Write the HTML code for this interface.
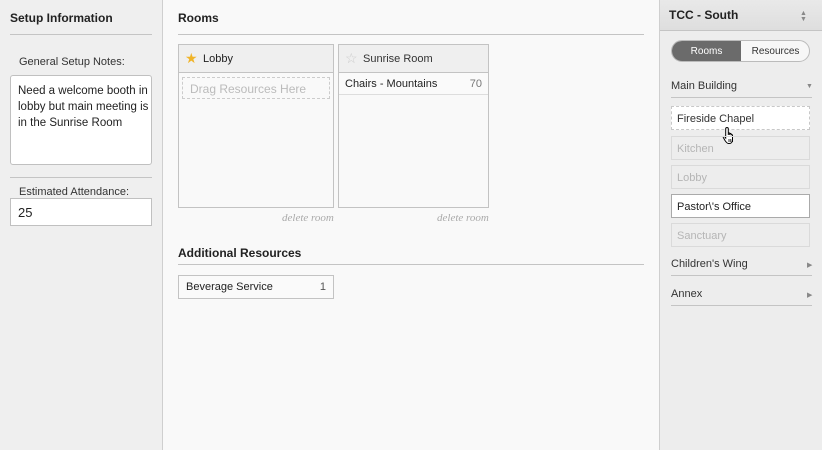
<!DOCTYPE html>
<html><head><meta charset="utf-8"><style>
*{margin:0;padding:0;box-sizing:border-box}
body{width:822px;height:450px;overflow:hidden;font-family:"Liberation Sans",Arial,sans-serif;color:#222;background:#f9f9f9;position:relative}
.a{position:absolute}
.h{font-weight:bold;font-size:12px;color:#222}
.ln{position:absolute;height:1px;background:#c4c4c4}
.s{font-size:11px}
.box{position:absolute;border:1px solid #c3c3c3;background:#f9f9f9}
.del{position:absolute;font-family:"Liberation Serif",serif;font-style:italic;font-size:11px;color:#aaa}
.it{position:absolute;left:671px;width:139px;height:24px;border:1px solid #dadada;font-size:11px;color:#b5b5b5;padding:6px 0 0 5px}
</style></head><body>
<div class="a" style="left:0;top:0;width:163px;height:450px;background:#efefef;border-right:1px solid #cfcfcf"></div>
<div class="a" style="left:659px;top:0;width:163px;height:450px;background:#ededed;border-left:1px solid #cfcfcf"></div>

<div class="a h" style="left:10px;top:11px">Setup Information</div>
<div class="ln" style="left:10px;top:34px;width:142px"></div>
<div class="a s" style="left:19px;top:56px;color:#333">General Setup Notes:</div>
<div class="a" style="left:10px;top:75px;width:142px;height:90px;background:#fff;border:1px solid #c0c0c0;border-radius:3px;font-size:11.5px;line-height:16px;padding:7px 2px 7px 7px;color:#222;white-space:nowrap">Need a welcome booth in<br>lobby but main meeting is<br>in the Sunrise Room</div>
<div class="ln" style="left:10px;top:177px;width:142px"></div>
<div class="a s" style="left:19px;top:186px;color:#333">Estimated Attendance:</div>
<div class="a" style="left:10px;top:198px;width:142px;height:28px;background:#fff;border:1px solid #c0c0c0;font-size:13px;padding:6px 7px">25</div>

<div class="a h" style="left:178px;top:11px">Rooms</div>
<div class="ln" style="left:178px;top:34px;width:466px"></div>
<div class="box" style="left:178px;top:44px;width:156px;height:164px">
 <div style="height:28px;background:#efefef;border-bottom:1px solid #c3c3c3;font-size:11px;padding:8px 0 0 24px;position:relative"><span style="position:absolute;left:6px;top:5px;color:#f0b429;font-size:14px">★</span>Lobby</div>
 <div style="margin:4px 3px;height:22px;border:1px dashed #ccc;font-size:12px;color:#bbb;padding:4px 7px">Drag Resources Here</div>
</div>
<div class="box" style="left:338px;top:44px;width:151px;height:164px">
 <div style="height:28px;background:#efefef;border-bottom:1px solid #c3c3c3;font-size:11px;padding:8px 0 0 24px;position:relative;color:#333"><span style="position:absolute;left:6px;top:5px;color:#ccc;font-size:14px">☆</span>Sunrise Room</div>
 <div style="height:22px;border-bottom:1px solid #ddd;background:#fafafa;font-size:11px;padding:5px 6px;position:relative">Chairs - Mountains<span style="position:absolute;right:6px;color:#777">70</span></div>
</div>
<div class="del" style="left:282px;top:212px">delete room</div>
<div class="del" style="left:437px;top:212px">delete room</div>

<div class="a h" style="left:178px;top:246px">Additional Resources</div>
<div class="ln" style="left:178px;top:264px;width:466px"></div>
<div class="box" style="left:178px;top:275px;width:156px;height:24px;background:#fafafa;font-size:11px;padding:5px 7px">Beverage Service<span style="position:absolute;right:7px;color:#555">1</span></div>

<div class="a" style="left:660px;top:0;width:162px;height:31px;background:linear-gradient(#e9e9e9,#dedede);border-bottom:1px solid #c4c4c4"></div>
<div class="a h" style="left:669px;top:8px">TCC - South</div>
<div class="a" style="left:800px;top:11px;font-size:7px;line-height:6px;color:#888">▲<br>▼</div>
<div class="a" style="left:671px;top:40px;width:139px;height:22px;border:1px solid #bbb;border-radius:11px;background:#f7f7f7;overflow:hidden;font-size:10px">
 <div style="position:absolute;left:0;top:0;width:69px;height:20px;line-height:21px;background:#6b6b6b;color:#fff;text-align:center">Rooms</div>
 <div style="position:absolute;left:69px;top:0;width:69px;height:20px;line-height:21px;color:#333;text-align:center">Resources</div>
</div>
<div class="a" style="left:671px;top:80px;font-size:11px;color:#333">Main Building</div>
<div class="a" style="left:806px;top:83px;font-size:7px;color:#888">▼</div>
<div class="ln" style="left:671px;top:97px;width:141px"></div>
<div class="it" style="top:106px;border:1px dashed #c8c8c8;background:#fff;color:#333">Fireside Chapel</div>
<svg class="a" style="left:722px;top:126px" width="16" height="20" viewBox="0 0 16 20"><path d="M5 1.5c.8 0 1.3.6 1.3 1.3V9V7.5c0-.8 1.4-.8 1.4 0V9V8c0-.8 1.4-.8 1.4 0v1.2c0-.8 1.4-.8 1.4 0V14c0 2-1.3 3.5-3.3 3.5H6.5C5 17.5 4 16 3 14.5L1.3 11.5c-.4-.8.6-1.5 1.3-.8L3.7 12V2.8c0-.7.5-1.3 1.3-1.3z" fill="#fff" stroke="#000" stroke-width="1"/><path d="M7 13v3M8.8 13v3M10.5 13v3" stroke="#000" stroke-width=".8"/></svg>
<div class="it" style="top:136px">Kitchen</div>
<div class="it" style="top:165px">Lobby</div>
<div class="it" style="top:194px;background:#fff;border-color:#aaa;color:#222">Pastor\'s Office</div>
<div class="it" style="top:223px">Sanctuary</div>
<div class="a" style="left:671px;top:258px;font-size:11px;color:#333">Children's Wing</div>
<div class="a" style="left:807px;top:261px;font-size:7px;color:#888">▶</div>
<div class="ln" style="left:671px;top:275px;width:141px"></div>
<div class="a" style="left:671px;top:288px;font-size:11px;color:#333">Annex</div>
<div class="a" style="left:807px;top:291px;font-size:7px;color:#888">▶</div>
<div class="ln" style="left:671px;top:305px;width:141px"></div>
</body></html>
